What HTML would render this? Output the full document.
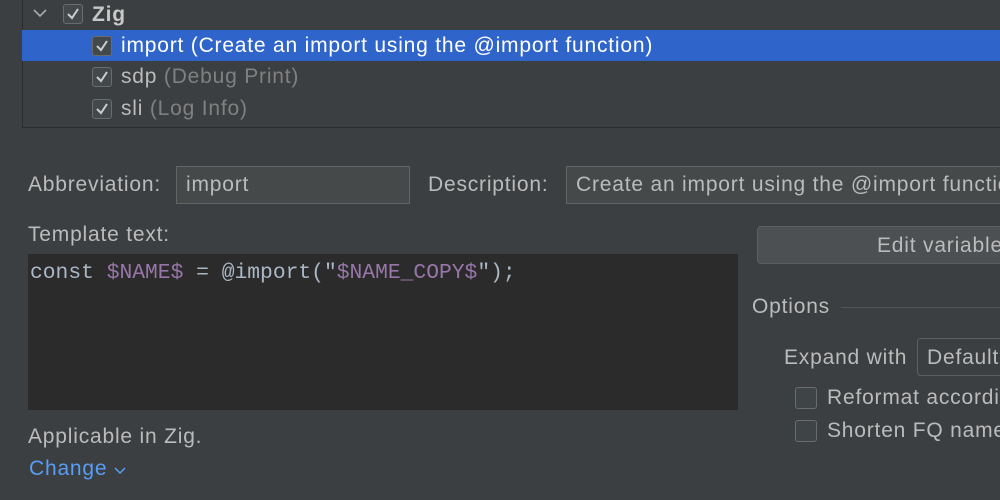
<!DOCTYPE html>
<html><head><style>
body{margin:0;width:1000px;height:500px;overflow:hidden;background:#3c3f41;font-family:"Liberation Sans",sans-serif;color:#bbbbbb;position:relative}
.a{position:absolute;white-space:nowrap}
.tree{position:absolute;left:22px;top:-2px;width:990px;height:128px;border:1px solid #2b2b2b;background:#3c3f41}
.cb{position:absolute;width:20px;height:20px;border:1px solid #6b6b6b;border-radius:3px;background:#43494a;box-sizing:border-box}
.cb svg{position:absolute;left:2px;top:2px}
.t{font-size:21px;line-height:24px;letter-spacing:0.8px}
.inp{position:absolute;white-space:nowrap;overflow:hidden;border:1px solid #646464;background:#45494a;box-sizing:border-box;font-size:21px;letter-spacing:0.8px;color:#bbbbbb;padding-left:9px;line-height:36px}
</style></head><body>
<div class="tree"></div>
<div class="a" style="left:22px;top:30px;width:978px;height:31px;background:#2f65ca"></div>
<svg class="a" style="left:33px;top:8px" width="14" height="10"><path d="M1 2 L7 8 L13 2" stroke="#aaa" stroke-width="1.6" fill="none"/></svg>
<div class="cb" style="left:63px;top:4px"><svg width="14" height="14"><path d="M2 7 L6 11 L12 2" stroke="#ccc" stroke-width="2" fill="none"/></svg></div>
<div class="a t" style="left:92px;top:3px;font-weight:bold;color:#c8c8c8">Zig</div>
<div class="cb" style="left:92px;top:36px"><svg width="14" height="14"><path d="M2 7 L6 11 L12 2" stroke="#ccc" stroke-width="2" fill="none"/></svg></div>
<div class="a t" style="left:121px;top:34px;color:#fff">import (Create an import using the @import function)</div>
<div class="cb" style="left:92px;top:67px"><svg width="14" height="14"><path d="M2 7 L6 11 L12 2" stroke="#ccc" stroke-width="2" fill="none"/></svg></div>
<div class="a t" style="left:121px;top:65px">sdp <span style="color:#808080">(Debug Print)</span></div>
<div class="cb" style="left:92px;top:99px"><svg width="14" height="14"><path d="M2 7 L6 11 L12 2" stroke="#ccc" stroke-width="2" fill="none"/></svg></div>
<div class="a t" style="left:121px;top:97px">sli <span style="color:#808080">(Log Info)</span></div>

<div class="a t" style="left:28px;top:173px">Abbreviation:</div>
<div class="inp" style="left:176px;top:166px;width:234px;height:38px">import</div>
<div class="a t" style="left:428px;top:173px">Description:</div>
<div class="inp" style="left:566px;top:166px;width:450px;height:38px">Create an import using the @import function</div>
<div class="a t" style="left:28px;top:223px">Template text:</div>
<div class="a" style="left:28px;top:254px;width:710px;height:156px;background:#2b2b2b"></div>
<div class="a" style="left:30px;top:260px;font-family:'Liberation Mono',monospace;font-size:21.3px;line-height:26px;color:#a9b7c6">const <span style="color:#9876aa">$NAME$</span> = @import("<span style="color:#9876aa">$NAME_COPY$</span>");</div>
<div class="a t" style="left:28px;top:425px">Applicable in Zig.</div>
<div class="a t" style="left:29px;top:457px;color:#589df6">Change <svg width="12" height="10"><path d="M1 3 L6 8 L11 3" stroke="#589df6" stroke-width="1.5" fill="none"/></svg></div>

<div class="a" style="left:757px;top:226px;width:260px;height:38px;border:1px solid #5e6060;border-radius:4px;background:#4c5052;box-sizing:border-box"></div>
<div class="a t" style="left:877px;top:234px">Edit variables</div>
<div class="a t" style="left:752px;top:295px">Options</div>
<div class="a" style="left:841px;top:307px;width:160px;height:1px;background:#555"></div>
<div class="a t" style="left:784px;top:346px">Expand with</div>
<div class="a" style="left:917px;top:338px;width:100px;height:38px;border:1px solid #5e6060;border-radius:4px;background:#3c3f41;box-sizing:border-box"></div>
<div class="a t" style="left:927px;top:346px">Default</div>
<div class="cb" style="left:795px;top:387px;width:22px;height:22px;background:#3f4446"></div>
<div class="a t" style="left:827px;top:386px">Reformat according</div>
<div class="cb" style="left:795px;top:420px;width:22px;height:22px;background:#3f4446"></div>
<div class="a t" style="left:827px;top:419px">Shorten FQ names</div>
</body></html>
